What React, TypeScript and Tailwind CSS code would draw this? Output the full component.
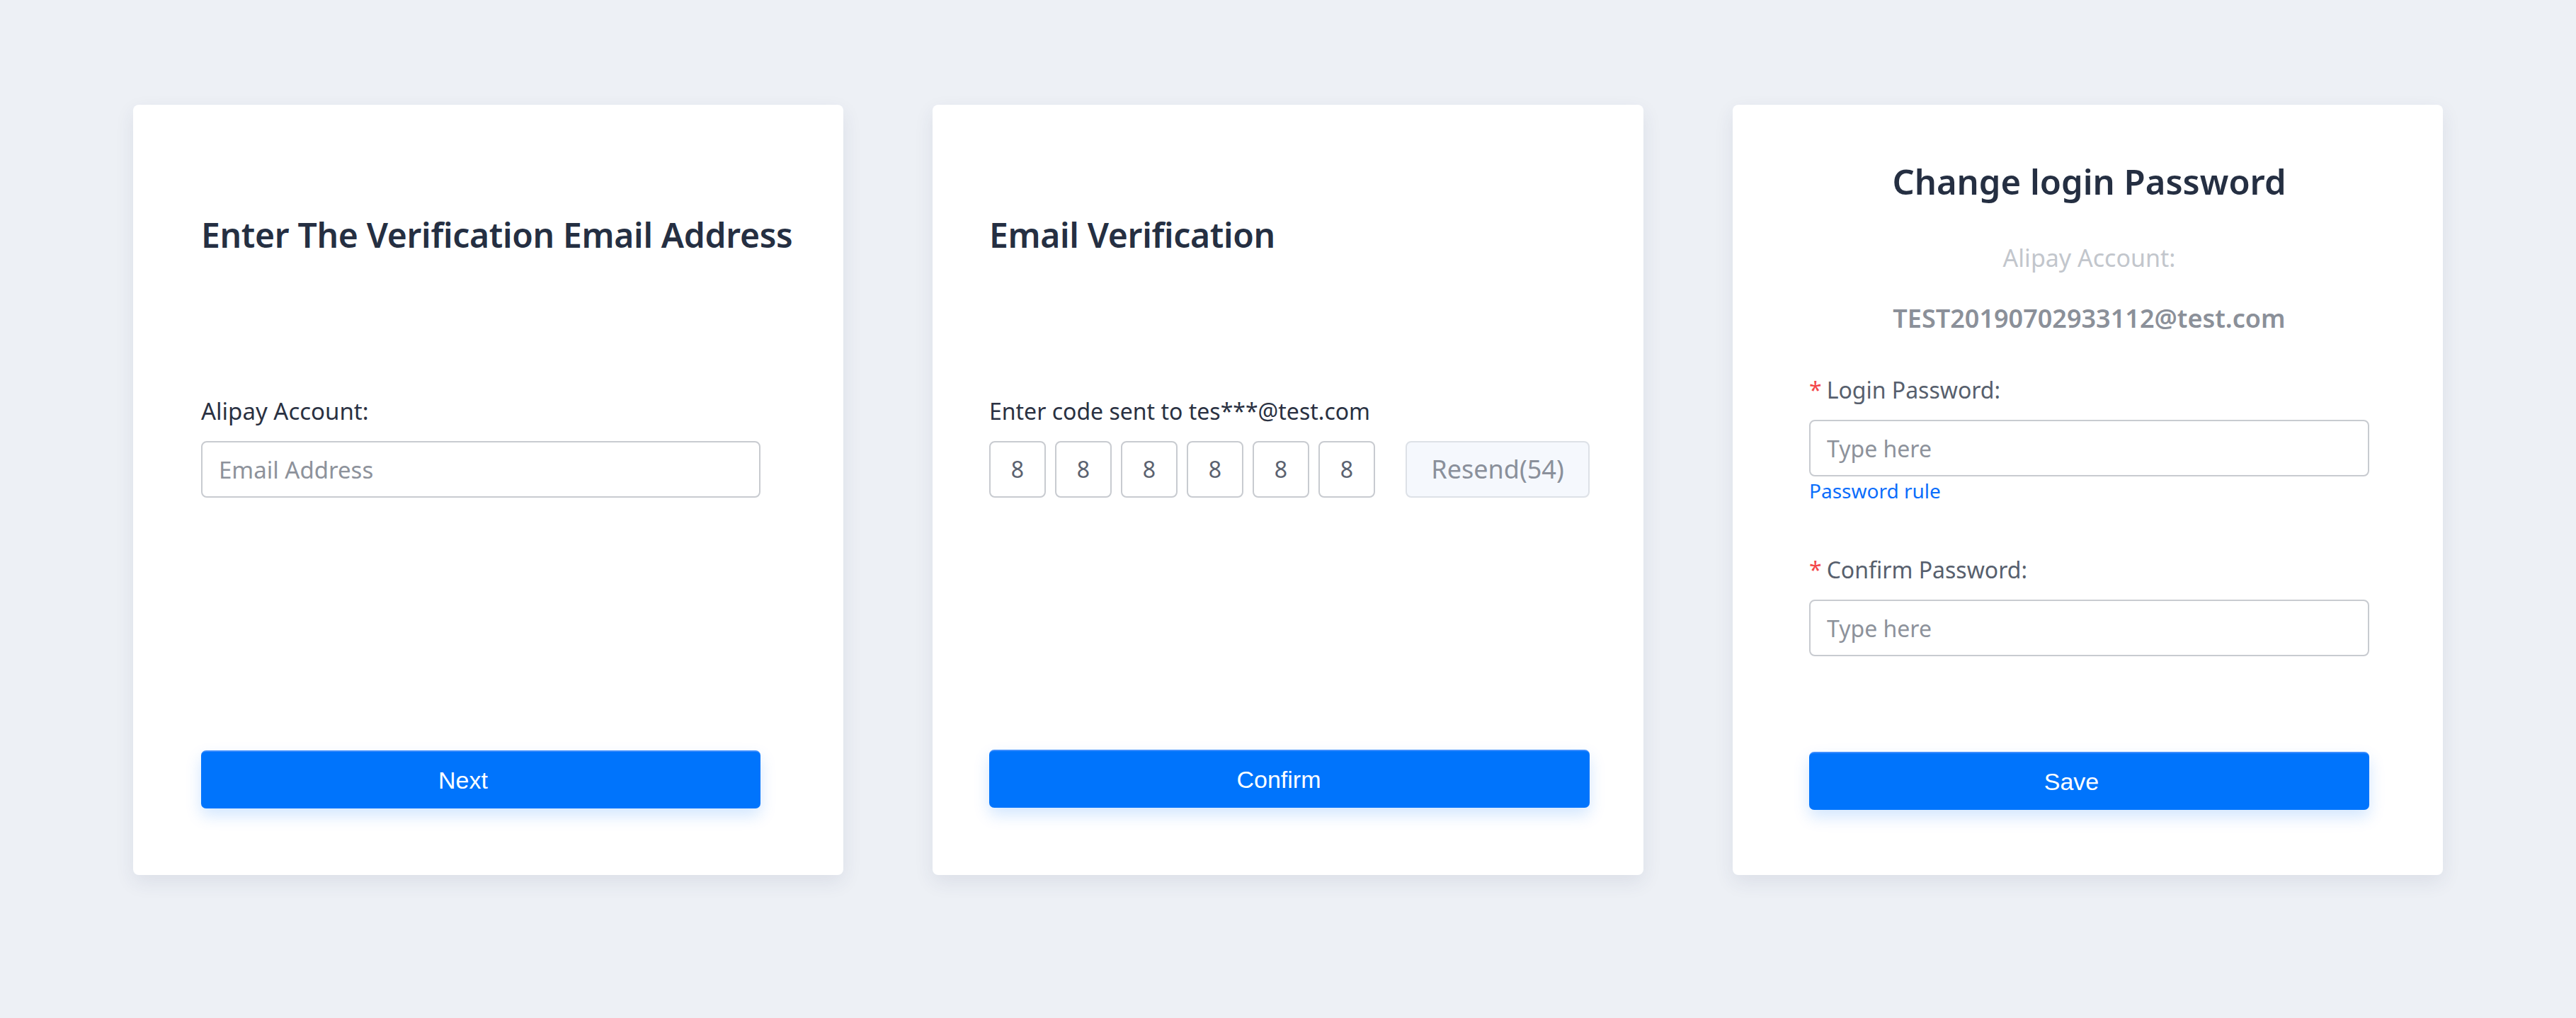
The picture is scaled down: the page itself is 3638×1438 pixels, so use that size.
import React from "react";

const sans = { fontFamily: '"Noto Sans", "Open Sans", sans-serif' };

function PrimaryButton({ label, className = "" }: { label: string; className?: string }) {
  return (
    <button
      type="button"
      className={`h-[82px] w-full rounded-[7px] border-t-2 border-[#3b8cfd] bg-[#0074fc] text-[34px] text-white shadow-[0_10px_22px_rgba(0,116,252,0.18)] ${className}`}
      style={{ fontFamily: '"Liberation Sans", Arial, sans-serif' }}
    >
      {label}
    </button>
  );
}

function TextInput({ placeholder, size = "text-[33px]" }: { placeholder: string; size?: string }) {
  return (
    <input
      type="text"
      placeholder={placeholder}
      className={`h-[80px] w-full rounded-[8px] border-2 border-[#c8cbd0] bg-white pl-[23px] ${size} text-[#2a3142] outline-none placeholder:text-[#8d929b]`}
    />
  );
}

function CardEmail() {
  return (
    <div className="flex h-[1088px] w-[1003px] flex-col rounded-[8px] bg-white pl-[96px] pt-[160px] shadow-[0_10px_28px_rgba(40,60,100,0.09)]">
      <div className="flex w-[790px] flex-col">
        <h2 className="whitespace-nowrap text-[48px] font-semibold leading-[48px] tracking-[-0.3px] text-[#252f42]">
          Enter The Verification Email Address
        </h2>
        <div className="mt-[205px] text-[33px] leading-[40px] text-[#2a3142]">Alipay Account:</div>
        <div className="mt-[22px]">
          <TextInput placeholder="Email Address" />
        </div>
        <PrimaryButton label="Next" className="mt-[357px] pr-[50px]" />
      </div>
    </div>
  );
}

function CardVerify() {
  const digits = ["8", "8", "8", "8", "8", "8"];
  return (
    <div className="flex h-[1088px] w-[1004px] flex-col rounded-[8px] bg-white pl-[80px] pr-[76px] pt-[160px] shadow-[0_10px_28px_rgba(40,60,100,0.09)]">
      <h2 className="whitespace-nowrap text-[48px] font-semibold leading-[48px] tracking-[-0.3px] text-[#252f42]">
        Email Verification
      </h2>
      <div className="mt-[205px] text-[32px] leading-[40px] text-[#2a3142]">
        Enter code sent to tes***@test.com
      </div>
      <div className="mt-[22px] flex items-center">
        <div className="flex gap-[13px]">
          {digits.map((d, i) => (
            <div
              key={i}
              className="flex h-[80px] w-[80px] items-center justify-center rounded-[8px] border-2 border-[#c8cbd0] text-[32px] text-[#5b6270]"
            >
              {d}
            </div>
          ))}
        </div>
        <button
          type="button"
          className="ml-auto flex h-[80px] w-[260px] items-center justify-center rounded-[8px] border-2 border-[#dde1e7] bg-[#f5f8fd] text-[36px] text-[#8a909b]"
        >
          Resend(54)
        </button>
      </div>
      <PrimaryButton label="Confirm" className="mt-[356px] pr-[30px]" />
    </div>
  );
}

function CardPassword() {
  return (
    <div className="flex h-[1088px] w-[1003px] flex-col rounded-[8px] bg-white pl-[108px] pr-[104px] pt-[84px] shadow-[0_10px_28px_rgba(40,60,100,0.09)]">
      <h2 className="whitespace-nowrap text-center text-[49px] font-semibold leading-[48px] text-[#252f42]">
        Change login Password
      </h2>
      <div className="mt-[64px] text-center text-[34px] leading-[40px] text-[#c2c6cc]">Alipay Account:</div>
      <div className="mt-[44px] text-center text-[36px] font-semibold leading-[44px] text-[#8b9099]">
        TEST20190702933112@test.com
      </div>
      <div className="mt-[59px] flex items-center text-[32px] leading-[40px] text-[#575f6d]">
        <span className="mr-[7px] text-[#f4474a]">*</span>
        <span>Login Password:</span>
      </div>
      <div className="mt-[22px]">
        <TextInput placeholder="Type here" size="text-[32px]" />
      </div>
      <div className="mt-[4px] text-[28px] leading-[32px] text-[#0a6dfb]">Password rule</div>
      <div className="mt-[76px] flex items-center text-[32px] leading-[40px] text-[#575f6d]">
        <span className="mr-[7px] text-[#f4474a]">*</span>
        <span>Confirm Password:</span>
      </div>
      <div className="mt-[22px]">
        <TextInput placeholder="Type here" size="text-[32px]" />
      </div>
      <PrimaryButton label="Save" className="mt-[135px] pr-[50px]" />
    </div>
  );
}

export default function App() {
  return (
    <div className="min-h-screen w-full bg-[#edf0f5]" style={sans}>
      <div className="flex justify-center gap-[126px] pt-[148px]">
        <CardEmail />
        <CardVerify />
        <CardPassword />
      </div>
    </div>
  );
}
